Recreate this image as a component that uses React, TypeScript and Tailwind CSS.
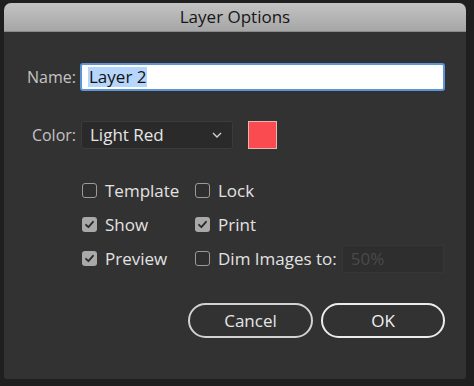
import React from "react";

function Check({ checked }: { checked: boolean }) {
  return checked ? (
    <div className="w-[15px] h-[15px] rounded-[3px] bg-[#a9a9a9] flex items-center justify-center">
      <svg width="11" height="11" viewBox="0 0 11 11">
        <path d="M2 5.8 L4.4 8.2 L9 2.8" fill="none" stroke="#2a2a2a" strokeWidth="1.8" strokeLinecap="round" strokeLinejoin="round" />
      </svg>
    </div>
  ) : (
    <div className="w-[15px] h-[15px] rounded-[3px] border border-[#9a9a9a] bg-[#2f2f2f]" />
  );
}

function Item({ checked, label }: { checked: boolean; label: string }) {
  return (
    <div className="flex items-center gap-[8px]">
      <Check checked={checked} />
      <span className="text-[17px] text-[#e2e2e2] leading-none">{label}</span>
    </div>
  );
}

export default function App() {
  return (
    <div
      className="w-[474px] h-[386px] bg-[#1f1f1f] pt-[3px] pl-[4px]"
      style={{ fontFamily: '"Open Sans", "Noto Sans", sans-serif' }}
    >
      <div className="w-[462px] h-[376px] bg-[#323232] rounded-t-[7px] rounded-b-[3px] overflow-hidden flex flex-col">
        <div className="h-[29px] bg-gradient-to-b from-[#c4c3c4] to-[#a7a6a7] border-b border-[#8a8a8a] flex items-center justify-center">
          <span className="text-[17px] text-[#161616]">Layer Options</span>
        </div>
        <div className="flex flex-col pr-[21px] pt-[31px]">
          <div className="flex items-center h-[28px]">
            <span className="w-[72px] text-right text-[16px] text-[#c4c4c4]">Name:</span>
            <div className="ml-[4px] flex-1 h-[28px] bg-white rounded-[3px] border-[2px] border-[#5d95d9] flex items-center pl-[6px]">
              <span className="bg-[#b6d6fb] text-[17px] text-[#111] leading-[20px] px-[1px]">Layer 2</span>
            </div>
          </div>
          <div className="flex items-center h-[28px] mt-[30px]">
            <span className="w-[72px] text-right text-[16px] text-[#c4c4c4]">Color:</span>
            <div className="ml-[5px] w-[152px] h-[28px] bg-[#2a2a2a] border border-[#3b3b3b] rounded-[3px] flex items-center justify-between pl-[8px] pr-[10px]">
              <span className="text-[17px] text-[#e6e6e6]">Light Red</span>
              <svg width="10" height="6" viewBox="0 0 10 6">
                <path d="M1 1 L5 5 L9 1" fill="none" stroke="#cfcfcf" strokeWidth="1.4" />
              </svg>
            </div>
            <div className="ml-[15px] w-[29px] h-[28px] bg-[#f94b50] border border-[#e8b4b4]" />
          </div>
          <div className="grid grid-cols-[113px_1fr] pl-[78px] mt-[33px] gap-y-[17px] items-center">
            <Item checked={false} label="Template" />
            <Item checked={false} label="Lock" />
            <Item checked={true} label="Show" />
            <Item checked={true} label="Print" />
            <Item checked={true} label="Preview" />
            <div className="flex items-center">
              <Item checked={false} label="Dim Images to:" />
              <div className="ml-[5px] w-[102px] h-[28px] -my-[6px] bg-[#2e2e2e] border border-[#363636] flex items-center pl-[8px]">
                <span className="text-[17px] text-[#4a4a4a]">50%</span>
              </div>
            </div>
          </div>
          <div className="flex justify-end gap-[8px] mt-[36px]">
            <div className="w-[125px] h-[35px] rounded-full border-[2px] border-[#d2d2d2] flex items-center justify-center">
              <span className="text-[17px] text-[#e6e6e6]">Cancel</span>
            </div>
            <div className="w-[124px] h-[35px] rounded-full border-[2px] border-[#ececec] flex items-center justify-center">
              <span className="text-[17px] text-[#f0f0f0]">OK</span>
            </div>
          </div>
        </div>
      </div>
    </div>
  );
}
